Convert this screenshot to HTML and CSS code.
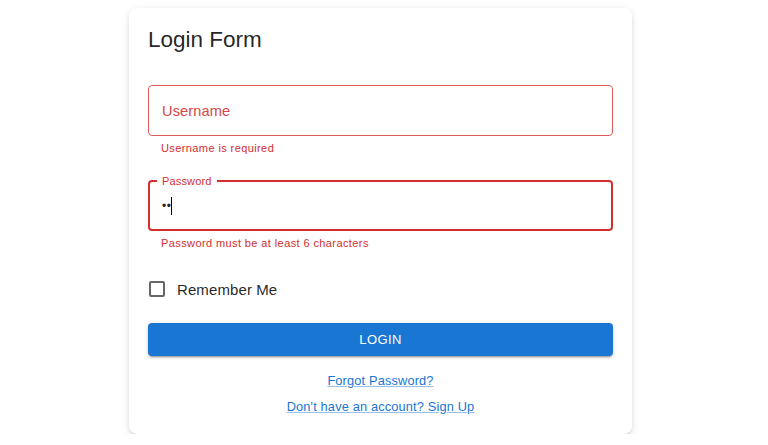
FILE: index.html
```html
<!DOCTYPE html>
<html lang="en">
<head>
<meta charset="utf-8">
<title>Login Form</title>
<link rel="stylesheet" href="styles.css">
</head>
<body>
<div class="card">
  <h1 class="title">Login Form</h1>

  <div class="field field-user">
    <div class="box box-user">
      <span class="placeholder">Username</span>
    </div>
    <div class="helper">Username is required</div>
  </div>

  <div class="field field-pass">
    <div class="box box-pass">
      <span class="legend">Password</span>
      <span class="value"><span class="dots">••</span><span class="caret"></span></span>
    </div>
    <div class="helper">Password must be at least 6 characters</div>
  </div>

  <label class="remember">
    <span class="check"></span>
    <span class="remember-text">Remember Me</span>
  </label>

  <button class="login" type="button">LOGIN</button>

  <div class="links">
    <a class="link" href="#">Forgot Password?</a>
    <a class="link" href="#">Don't have an account? Sign Up</a>
  </div>
</div>
</body>
</html>
```

FILE: styles.css
```css
html, body {
  margin: 0;
  padding: 0;
  background: #ffffff;
}

body {
  font-family: "Liberation Sans", Arial, sans-serif;
  color: rgba(0, 0, 0, 0.87);
}

.card {
  box-sizing: border-box;
  width: 503px;
  margin: 8px 0 0 129px;
  padding: 17px 19px 17px;
  background: #ffffff;
  border-radius: 8px;
  box-shadow: 0px 3px 3px -2px rgba(0, 0, 0, 0.12),
              0px 3px 4px 0px rgba(0, 0, 0, 0.08),
              0px 1px 8px 0px rgba(0, 0, 0, 0.08);
  display: flex;
  flex-direction: column;
}

.title {
  margin: 0;
  font-size: 22.5px;
  line-height: 30px;
  font-weight: 400;
  color: rgba(0, 0, 0, 0.87);
}

.field {
  display: flex;
  flex-direction: column;
}

.field-user {
  margin-top: 30px;
}

.field-pass {
  margin-top: 23px;
}

.box {
  box-sizing: border-box;
  position: relative;
  height: 51px;
  border-radius: 4px;
  display: flex;
  align-items: center;
}

.box-user {
  border: 1px solid #e05a5a;
  padding-left: 13px;
}

.placeholder {
  font-size: 14.6px;
  color: #d94545;
  letter-spacing: 0.1px;
}

.box-pass {
  border: 2px solid #d32f2f;
  padding-left: 12px;
}

.legend {
  position: absolute;
  left: 7px;
  top: -8px;
  padding: 0 5px;
  background: #ffffff;
  font-size: 11px;
  line-height: 14px;
  color: #d32f2f;
  letter-spacing: 0.15px;
}

.value {
  display: flex;
  align-items: center;
  color: rgba(0, 0, 0, 0.87);
}

.dots {
  font-size: 12px;
  letter-spacing: 0.5px;
}

.caret {
  display: inline-block;
  width: 1px;
  height: 18px;
  margin-left: 0;
  background: #000000;
}

.helper {
  margin: 3px 0 0 13px;
  font-size: 11px;
  line-height: 18px;
  letter-spacing: 0.4px;
  color: #d32f2f;
}

.remember {
  margin-top: 25px;
  height: 24px;
  display: flex;
  align-items: center;
  gap: 12px;
  padding-left: 1px;
}

.check {
  box-sizing: border-box;
  width: 16px;
  height: 16px;
  border: 2px solid rgba(0, 0, 0, 0.6);
  border-radius: 2px;
}

.remember-text {
  font-size: 15px;
  letter-spacing: 0.1px;
  color: rgba(0, 0, 0, 0.87);
}

.login {
  margin-top: 22px;
  height: 33px;
  border: none;
  border-radius: 4px;
  background: #1976d2;
  color: #ffffff;
  font-family: "Liberation Sans", Arial, sans-serif;
  font-size: 13px;
  font-weight: 400;
  letter-spacing: 0.4px;
  box-shadow: 0px 3px 1px -2px rgba(0, 0, 0, 0.2),
              0px 2px 2px 0px rgba(0, 0, 0, 0.14),
              0px 1px 5px 0px rgba(0, 0, 0, 0.12);
  cursor: pointer;
}

.links {
  margin-top: 15px;
  display: flex;
  flex-direction: column;
  align-items: center;
  gap: 6px;
}

.link {
  font-size: 12.8px;
  line-height: 20px;
  color: #1976d2;
  text-decoration: underline;
  text-decoration-color: rgba(25, 118, 210, 0.45);
  letter-spacing: 0.15px;
}
```
